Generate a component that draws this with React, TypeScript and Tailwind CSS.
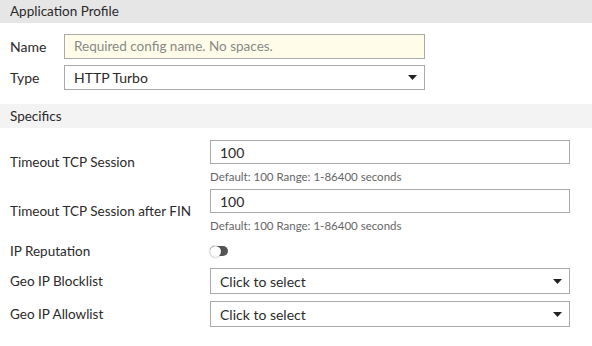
import React from "react";

const Caret = () => (
  <svg width="9" height="5" viewBox="0 0 9 5" className="shrink-0">
    <path d="M0 0 H9 L4.5 5 Z" fill="#222" />
  </svg>
);

function Select({ value, className = "" }: { value: string; className?: string }) {
  return (
    <div
      className={`flex items-center justify-between border border-[#aaaaaa] bg-white pl-[9px] pr-[7px] text-[14px] text-[#2a2a2a] ${className}`}
    >
      <span>{value}</span>
      <Caret />
    </div>
  );
}

function NumField({ value }: { value: string }) {
  return (
    <div className="flex flex-col">
      <div className="flex h-[24px] w-[360px] items-center border border-[#aaaaaa] bg-white pl-[9px] text-[14px] text-[#2a2a2a]">
        {value}
      </div>
      <div className="mt-[6px] text-[11.5px] leading-[14px] text-[#666]">
        Default: 100 Range: 1-86400 seconds
      </div>
    </div>
  );
}

export default function App() {
  return (
    <div
      className="h-[346px] w-[592px] bg-white text-[#2a2a2a]"
      style={{ fontFamily: "Lato, 'Liberation Sans', sans-serif" }}
    >
      <div className="flex h-[23px] items-center bg-[#e6e6e6] px-[10px] text-[13.5px]">
        Application Profile
      </div>
      <div className="flex flex-col gap-[6px] px-[10px] pt-[11px] pb-[14px]">
        <div className="flex items-center">
          <div className="w-[54px] text-[14px]">Name</div>
          <div className="flex h-[25px] w-[361px] items-center border border-[#aaaaaa] bg-[#fffde9] pl-[9px] text-[13.5px] text-[#888]">
            Required config name. No spaces.
          </div>
        </div>
        <div className="flex items-center">
          <div className="w-[54px] text-[14px]">Type</div>
          <Select value="HTTP Turbo" className="h-[25px] w-[361px]" />
        </div>
      </div>
      <div className="flex h-[24px] items-center bg-[#f3f3f3] px-[10px] text-[13.5px]">
        Specifics
      </div>
      <div className="flex flex-col px-[10px] pt-[12px]">
        <div className="flex items-center">
          <div className="w-[200px] text-[13.5px] leading-[18px]">Timeout TCP Session</div>
          <NumField value="100" />
        </div>
        <div className="mt-[5px] flex items-center">
          <div className="w-[200px] text-[13.5px] leading-[18px]">Timeout TCP Session after FIN</div>
          <NumField value="100" />
        </div>
        <div className="mt-[8px] flex h-[20px] items-center">
          <div className="w-[200px] text-[13.5px]">IP Reputation</div>
          <div className="relative h-[10px] w-[18px] rounded-full bg-[#555]">
            <div className="absolute left-0 top-[-0.5px] h-[11px] w-[11px] rounded-full bg-white shadow-[0_0_2px_rgba(0,0,0,0.5)]" />
          </div>
        </div>
        <div className="mt-[7px] flex items-center">
          <div className="w-[200px] text-[13.5px]">Geo IP Blocklist</div>
          <Select value="Click to select" className="h-[26px] w-[360px]" />
        </div>
        <div className="mt-[7px] flex items-center">
          <div className="w-[200px] text-[13.5px]">Geo IP Allowlist</div>
          <Select value="Click to select" className="h-[26px] w-[360px]" />
        </div>
      </div>
    </div>
  );
}
